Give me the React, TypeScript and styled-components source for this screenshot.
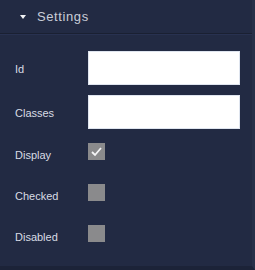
import React from "react";
import styled, { createGlobalStyle } from "styled-components";

const Global = createGlobalStyle`
  html, body { margin: 0; padding: 0; background: #222a43; }
  body { font-family: "Liberation Sans", Arial, sans-serif; }
`;

const Panel = styled.div`
  width: 255px;
  height: 270px;
  box-sizing: border-box;
  background: #222a43;
  border-right: 3px solid #273049;
  border-bottom: 4px solid #1c2338;
  display: flex;
  flex-direction: column;
  overflow: hidden;
`;

const Header = styled.div`
  height: 34px;
  box-sizing: border-box;
  display: flex;
  align-items: center;
  padding-left: 20px;
  gap: 11px;
  border-bottom: 1px solid #1a2032;
  box-shadow: 0 1px 0 #283150;
  color: #c9cdd8;
  font-size: 13px;
  letter-spacing: 0.6px;
`;

const Caret = styled.span`
  width: 0;
  height: 0;
  border-left: 3.5px solid transparent;
  border-right: 3.5px solid transparent;
  border-top: 4px solid #f2f3f6;
  margin-top: 1px;
`;

const Form = styled.div`
  display: flex;
  flex-direction: column;
  padding: 17px 12px 0 15px;
`;

const Row = styled.div<{ $h: number; $mb: number }>`
  display: flex;
  align-items: center;
  height: ${(p) => p.$h}px;
  margin-bottom: ${(p) => p.$mb}px;
`;

const Label = styled.span<{ $drop?: number }>`
  width: 73px;
  font-size: 11px;
  color: #d9dce5;
  padding-top: ${(p) => p.$drop ?? 2}px;
`;

const Input = styled.input`
  width: 152px;
  height: 34px;
  box-sizing: border-box;
  border: 1px solid #dfe5ef;
  background: #ffffff;
  margin: 0;
  padding: 0 6px;
  outline: none;
`;

const Box = styled.span`
  width: 17px;
  height: 17px;
  background: #8a8a8c;
  display: flex;
  align-items: center;
  justify-content: center;
`;

const Check = ({ checked }: { checked?: boolean }) => (
  <Box>
    {checked && (
      <svg width="13" height="13" viewBox="0 0 13 13">
        <path d="M2 7 L5 10 L11 3" fill="none" stroke="#f4f4f6" strokeWidth="1.8" />
      </svg>
    )}
  </Box>
);

export default function App() {
  return (
    <>
      <Global />
      <Panel>
        <Header>
          <Caret />
          <span>Settings</span>
        </Header>
        <Form>
          <Row $h={34} $mb={10}>
            <Label>Id</Label>
            <Input />
          </Row>
          <Row $h={34} $mb={2}>
            <Label>Classes</Label>
            <Input />
          </Row>
          <Row $h={41} $mb={0}>
            <Label $drop={6}>Display</Label>
            <Check checked />
          </Row>
          <Row $h={41} $mb={0}>
            <Label $drop={6}>Checked</Label>
            <Check />
          </Row>
          <Row $h={41} $mb={0}>
            <Label $drop={6}>Disabled</Label>
            <Check />
          </Row>
        </Form>
      </Panel>
    </>
  );
}
